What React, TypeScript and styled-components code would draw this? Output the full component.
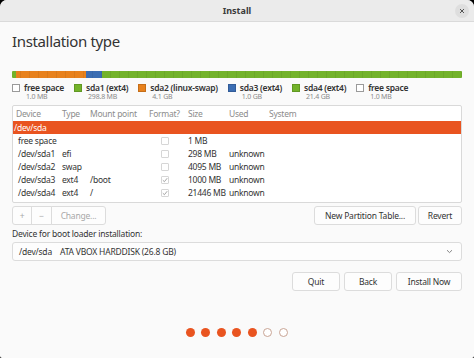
import React from "react";
import styled, { createGlobalStyle, css } from "styled-components";

const GlobalStyle = createGlobalStyle`
  html, body { margin: 0; padding: 0; background: #000; }
  body { font-family: "Noto Sans", "Open Sans", sans-serif; color: #333; }
  * { box-sizing: border-box; }
`;

const ORANGE = "#e95420";

const Window = styled.div`
  width: 474px;
  height: 358px;
  background: #fafafa;
  border-radius: 7px 7px 2px 2px;
  overflow: hidden;
  display: flex;
  flex-direction: column;
`;

const TitleBar = styled.div`
  height: 22px;
  flex: none;
  background: #ebebeb;
  border-bottom: 1px solid #dadada;
  display: flex;
  align-items: center;
  justify-content: center;
  position: relative;
`;

const Title = styled.div`
  font-size: 9px;
  font-weight: 700;
  color: #3a3a3a;
`;

const CloseButton = styled.div`
  position: absolute;
  right: 5px;
  top: 4px;
  width: 14px;
  height: 14px;
  border-radius: 50%;
  background: #dedede;
  display: flex;
  align-items: center;
  justify-content: center;
`;

const Content = styled.div`
  flex: 1;
  display: flex;
  flex-direction: column;
  padding: 0 12px;
`;

const Heading = styled.h1`
  margin: 8px 0 0;
  height: 22px;
  font-size: 15px;
  font-weight: 400;
  letter-spacing: -0.35px;
  color: #333;
  line-height: 22px;
`;

const Bar = styled.div`
  margin-top: 19px;
  height: 7px;
  display: flex;
  border-radius: 1px;
  overflow: hidden;
  position: relative;
  &::after {
    content: "";
    position: absolute;
    inset: 0;
    background: repeating-linear-gradient(
      90deg,
      rgba(0, 0, 0, 0) 0,
      rgba(0, 0, 0, 0) 8px,
      rgba(0, 0, 0, 0.06) 8px,
      rgba(0, 0, 0, 0.06) 9px
    );
  }
`;

const Segment = styled.div<{ $color: string; $grow?: number; $w?: number }>`
  background: ${(p) => p.$color};
  ${(p) => (p.$w !== undefined ? css`width: ${p.$w}px; flex: none;` : css`flex: ${p.$grow ?? 1};`)}
`;

const Legend = styled.div`
  margin-top: 4px;
  display: flex;
  gap: 10px;
`;

const LegendItem = styled.div`
  display: flex;
  gap: 4px;
  align-items: flex-start;
`;

const Swatch = styled.div<{ $color?: string }>`
  width: 8px;
  height: 8px;
  margin-top: 2px;
  background: ${(p) => p.$color ?? "#fff"};
  border: 1px solid ${(p) => (p.$color ? "rgba(0,0,0,0.15)" : "#9a9a9a")};
`;

const LegendText = styled.div`
  display: flex;
  flex-direction: column;
`;

const LegendLabel = styled.span`
  font-size: 8.5px;
  font-weight: 600;
  line-height: 11px;
  letter-spacing: -0.25px;
  color: #333;
  white-space: nowrap;
`;

const LegendSize = styled.span`
  font-size: 7px;
  line-height: 8px;
  color: #8a8a8a;
  padding-left: 2px;
  letter-spacing: -0.2px;
`;

const TableBox = styled.div`
  margin-top: 4px;
  border: 1px solid #d9d9d9;
  background: #fff;
  border-radius: 2px;
  padding-bottom: 3px;
`;

const Row = styled.div<{ $kind?: "header" | "selected" | "normal" }>`
  display: grid;
  align-items: center;
  font-size: 8.5px;
  letter-spacing: -0.25px;
  white-space: nowrap;
  ${(p) =>
    p.$kind === "header"
      ? css`
          grid-template-columns: 46px 28px 59px 39px 41px 40px 1fr;
          height: 15px;
          color: #8c8c8c;
          padding-left: 3px;
        `
      : p.$kind === "selected"
      ? css`
          grid-template-columns: 1fr;
          height: 13px;
          background: ${ORANGE};
          color: #fff;
          padding-left: 1px;
        `
      : css`
          grid-template-columns: 44px 28px 59px 39px 41px 40px 1fr;
          height: 13px;
          color: #333;
          padding-left: 5px;
        `}
`;

const Cell = styled.span<{ $check?: boolean }>`
  ${(p) => p.$check && css`display: flex; padding-left: 12px;`}
`;

const CheckBox = styled.span`
  width: 8px;
  height: 8px;
  border: 1px solid #d6d6d6;
  border-radius: 1px;
  background: #fff;
  display: flex;
  align-items: center;
  justify-content: center;
`;

const ToolRow = styled.div`
  margin-top: 3px;
  display: flex;
  justify-content: space-between;
`;

const Group = styled.div`
  display: flex;
  gap: 2px;
`;

const Button = styled.button<{ $w?: number; $disabled?: boolean }>`
  height: 19px;
  ${(p) => p.$w !== undefined && css`width: ${p.$w}px;`}
  padding: 0;
  border: 1px solid #dcdcdc;
  border-radius: 3px;
  background: #fdfdfd;
  font-family: inherit;
  font-size: 8.5px;
  letter-spacing: -0.2px;
  white-space: nowrap;
  color: ${(p) => (p.$disabled ? "#a8a8a8" : "#333")};
  display: flex;
  align-items: center;
  justify-content: center;
`;

const Linked = styled.div`
  display: flex;
  & > button { border-radius: 0; margin-left: -1px; }
  & > button:first-child { border-radius: 3px 0 0 3px; margin-left: 0; }
  & > button:last-child { border-radius: 0 3px 3px 0; }
`;

const FieldLabel = styled.div`
  margin-top: 3px;
  font-size: 8.5px;
  letter-spacing: -0.2px;
  line-height: 12px;
  color: #333;
`;

const Select = styled.div`
  margin-top: 2px;
  height: 19px;
  border: 1px solid #dcdcdc;
  border-radius: 3px;
  background: #fdfdfd;
  display: flex;
  align-items: center;
  padding: 0 8px 0 6px;
  font-size: 8.5px;
  letter-spacing: -0.2px;
  color: #333;
`;

const SelectText = styled.span`
  flex: 1;
  white-space: pre;
`;

const Actions = styled.div`
  margin-top: 11px;
  display: flex;
  justify-content: flex-end;
  gap: 4px;
`;

const Dots = styled.div`
  margin-top: 37px;
  display: flex;
  justify-content: center;
  gap: 6.5px;
  padding-right: 1px;
`;

const Dot = styled.span<{ $filled: boolean }>`
  width: 9px;
  height: 9px;
  border-radius: 50%;
  ${(p) =>
    p.$filled
      ? css`background: ${ORANGE};`
      : css`border: 1px solid #c9a595; background: #fff;`}
`;

const Check = () => (
  <svg width="6" height="6" viewBox="0 0 6 6">
    <path d="M0.8 3.2 L2.4 4.7 L5.2 1.2" stroke="#9a9a9a" strokeWidth="0.9" fill="none" />
  </svg>
);

const rows = [
  { dev: "free space", type: "", mount: "", fmt: false, size: "1 MB", used: "" },
  { dev: "/dev/sda1", type: "efi", mount: "", fmt: false, size: "298 MB", used: "unknown" },
  { dev: "/dev/sda2", type: "swap", mount: "", fmt: false, size: "4095 MB", used: "unknown" },
  { dev: "/dev/sda3", type: "ext4", mount: "/boot", fmt: true, size: "1000 MB", used: "unknown" },
  { dev: "/dev/sda4", type: "ext4", mount: "/", fmt: true, size: "21446 MB", used: "unknown" },
];

const legend = [
  { label: "free space", size: "1.0 MB" },
  { label: "sda1 (ext4)", size: "298.8 MB", color: "#73b32a" },
  { label: "sda2 (linux-swap)", size: "4.1 GB", color: "#e8821e" },
  { label: "sda3 (ext4)", size: "1.0 GB", color: "#3b6db3" },
  { label: "sda4 (ext4)", size: "21.4 GB", color: "#73b32a" },
  { label: "free space", size: "1.0 MB" },
];

export default function App() {
  return (
    <>
      <GlobalStyle />
      <Window>
        <TitleBar>
          <Title>Install</Title>
          <CloseButton>
            <svg width="6" height="6" viewBox="0 0 6 6">
              <path d="M1 1 L5 5 M5 1 L1 5" stroke="#555" strokeWidth="1" />
            </svg>
          </CloseButton>
        </TitleBar>
        <Content>
          <Heading>Installation type</Heading>
          <Bar>
            <Segment $color="#73b32a" $w={4} />
            <Segment $color="#e8821e" $w={70} />
            <Segment $color="#3b6db3" $w={16} />
            <Segment $color="#73b32a" $grow={1} />
          </Bar>
          <Legend>
            {legend.map((l, i) => (
              <LegendItem key={i}>
                <Swatch $color={l.color} />
                <LegendText>
                  <LegendLabel>{l.label}</LegendLabel>
                  <LegendSize>{l.size}</LegendSize>
                </LegendText>
              </LegendItem>
            ))}
          </Legend>
          <TableBox>
            <Row $kind="header">
              <Cell>Device</Cell>
              <Cell>Type</Cell>
              <Cell>Mount point</Cell>
              <Cell>Format?</Cell>
              <Cell>Size</Cell>
              <Cell>Used</Cell>
              <Cell>System</Cell>
            </Row>
            <Row $kind="selected">
              <Cell>/dev/sda</Cell>
            </Row>
            {rows.map((r, i) => (
              <Row key={i}>
                <Cell>{r.dev}</Cell>
                <Cell>{r.type}</Cell>
                <Cell>{r.mount}</Cell>
                <Cell $check>
                  <CheckBox>{r.fmt && <Check />}</CheckBox>
                </Cell>
                <Cell>{r.size}</Cell>
                <Cell>{r.used}</Cell>
                <Cell />
              </Row>
            ))}
          </TableBox>
          <ToolRow>
            <Linked>
              <Button $w={20} $disabled>+</Button>
              <Button $w={21} $disabled>−</Button>
              <Button $w={55} $disabled>Change...</Button>
            </Linked>
            <Group>
              <Button $w={102}>New Partition Table...</Button>
              <Button $w={44}>Revert</Button>
            </Group>
          </ToolRow>
          <FieldLabel>Device for boot loader installation:</FieldLabel>
          <Select>
            <SelectText>{"/dev/sda    ATA VBOX HARDDISK (26.8 GB)"}</SelectText>
            <svg width="7" height="5" viewBox="0 0 7 5">
              <path d="M1 1.2 L3.5 3.6 L6 1.2" stroke="#777" strokeWidth="0.9" fill="none" />
            </svg>
          </Select>
          <Actions>
            <Button $w={48}>Quit</Button>
            <Button $w={48}>Back</Button>
            <Button $w={66}>Install Now</Button>
          </Actions>
          <Dots>
            {[1, 1, 1, 1, 1, 0, 0].map((f, i) => (
              <Dot key={i} $filled={!!f} />
            ))}
          </Dots>
        </Content>
      </Window>
    </>
  );
}
